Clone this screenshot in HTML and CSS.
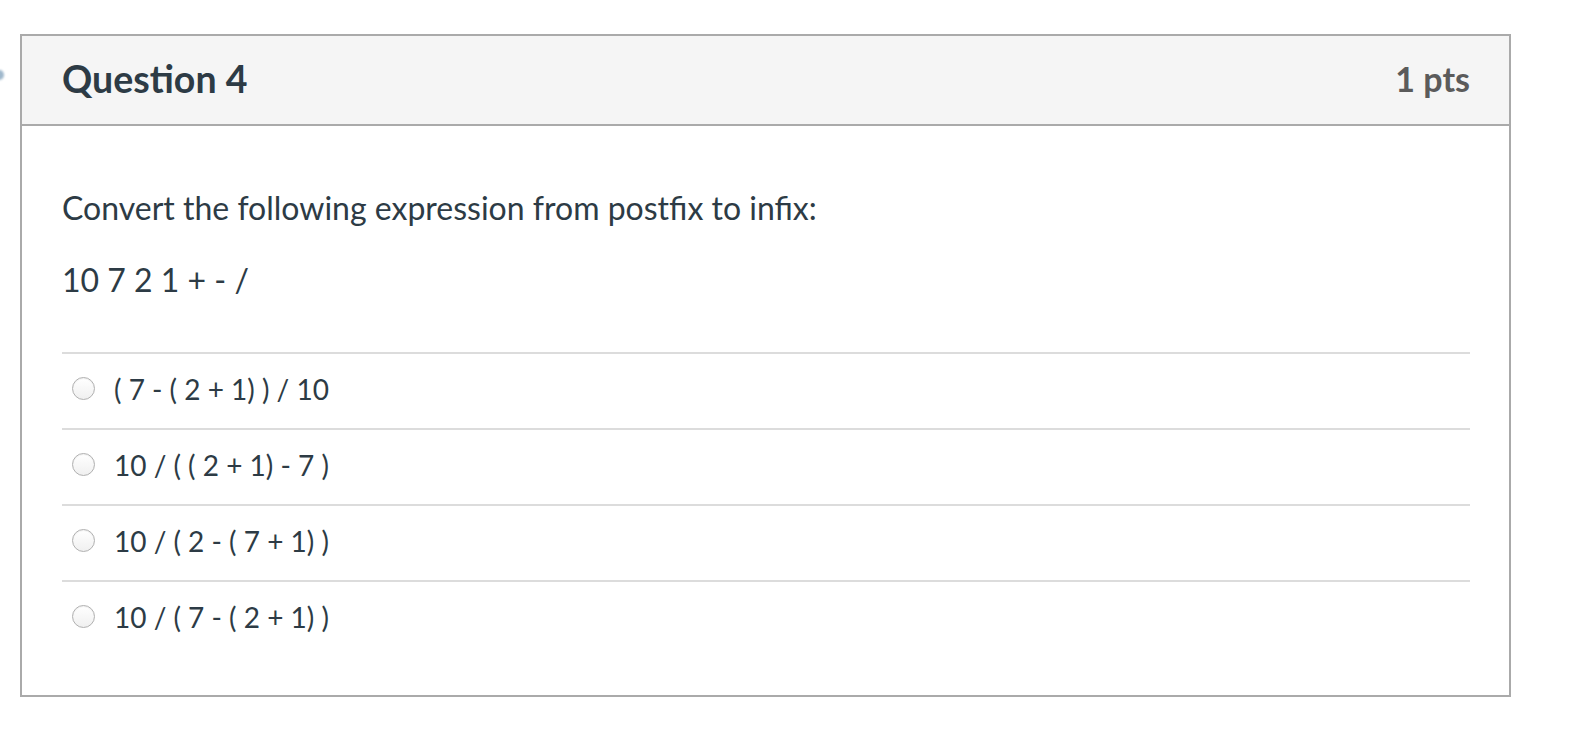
FILE: index.html
```html
<!DOCTYPE html>
<html lang="en">
<head>
<meta charset="utf-8">
<title>Question 4</title>
<link rel="stylesheet" href="styles.css">
</head>
<body>
<div class="page">
  <span class="edge-dot"></span>
  <div class="question">
    <div class="question-header">
      <h2 class="question-title">Question 4</h2>
      <span class="question-points">1 pts</span>
    </div>
    <div class="question-body">
      <p class="question-text">Convert the following expression from postfix to infix:</p>
      <p class="question-expr">10 7 2 1 + - /</p>
      <div class="answers">
        <label class="answer"><span class="radio"></span><span class="answer-text">( 7 - ( 2 + 1) ) / 10</span></label>
        <label class="answer"><span class="radio"></span><span class="answer-text">10 / ( ( 2 + 1) - 7 )</span></label>
        <label class="answer"><span class="radio"></span><span class="answer-text">10 / ( 2 - ( 7 + 1) )</span></label>
        <label class="answer"><span class="radio"></span><span class="answer-text">10 / ( 7 - ( 2 + 1) )</span></label>
      </div>
    </div>
  </div>
</div>
</body>
</html>
```

FILE: styles.css
```css
* { box-sizing: border-box; }

html, body {
  margin: 0;
  padding: 0;
  background: #ffffff;
}

body {
  font-family: Lato, "Open Sans", "Liberation Sans", sans-serif;
  color: #2d3b45;
}

.page {
  position: relative;
  padding: 34px 0 0 20px;
  width: 1511px;
}

.edge-dot {
  position: absolute;
  left: -5px;
  top: 70px;
  width: 9px;
  height: 10px;
  border-radius: 50%;
  background: #9fb8cc;
  filter: blur(1px);
}

.question {
  border: 2px solid #aaaaaa;
  background: #ffffff;
}

.question-header {
  display: flex;
  align-items: center;
  justify-content: space-between;
  height: 90px;
  padding: 0 39px 2px 40px;
  background: #f5f5f5;
  border-bottom: 2px solid #aaaaaa;
}

.question-title {
  margin: 0;
  font-size: 37.5px;
  font-weight: 700;
  color: #2d3b45;
  line-height: 40px;
}

.question-points {
  font-size: 34px;
  font-weight: 700;
  color: #5b5b5b;
  line-height: 40px;
}

.question-body {
  padding: 62px 39px 39px 40px;
}

.question-text,
.question-expr {
  margin: 0;
  font-size: 32px;
  line-height: 40px;
}

.question-expr {
  margin-top: 32px;
  margin-bottom: 52px;
}

.answers {
  display: flex;
  flex-direction: column;
}

.answer {
  display: flex;
  align-items: center;
  height: 76px;
  padding-bottom: 5px;
  border-top: 2px solid #dcdcdc;
}

.radio {
  flex: none;
  width: 23px;
  height: 23px;
  margin-left: 10px;
  margin-right: 19px;
  border-radius: 50%;
  border: 1px solid #b0b0b0;
  background: linear-gradient(#ffffff, #f0f0f0);
  box-shadow: inset 0 1px 1px rgba(0,0,0,0.06);
}

.answer-text {
  font-size: 28px;
  line-height: 36px;
  color: #2d3b45;
}
```
